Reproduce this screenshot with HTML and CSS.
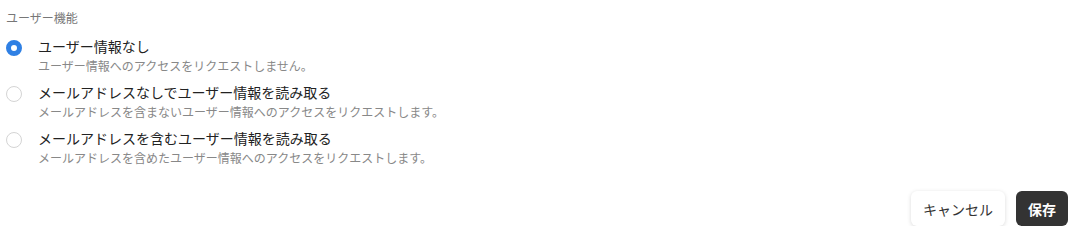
FILE: index.html
```html
<!DOCTYPE html>
<html lang="ja">
<head>
    <meta charset="UTF-8">
    <meta name="viewport" content="width=device-width, initial-scale=1.0">
    <title>ユーザー機能</title>
    <link rel="stylesheet" href="styles.css">
</head>
<body>
    <div class="panel">
        <div class="section-label">ユーザー機能</div>

        <div class="options">
            <label class="option">
                <input type="radio" name="user-scope" class="radio" checked>
                <span class="option-text">
                    <span class="option-title">ユーザー情報なし</span>
                    <span class="option-desc">ユーザー情報へのアクセスをリクエストしません。</span>
                </span>
            </label>

            <label class="option">
                <input type="radio" name="user-scope" class="radio">
                <span class="option-text">
                    <span class="option-title">メールアドレスなしでユーザー情報を読み取る</span>
                    <span class="option-desc">メールアドレスを含まないユーザー情報へのアクセスをリクエストします。</span>
                </span>
            </label>

            <label class="option">
                <input type="radio" name="user-scope" class="radio">
                <span class="option-text">
                    <span class="option-title">メールアドレスを含むユーザー情報を読み取る</span>
                    <span class="option-desc">メールアドレスを含めたユーザー情報へのアクセスをリクエストします。</span>
                </span>
            </label>
        </div>

        <div class="actions">
            <button class="btn btn-cancel">キャンセル</button>
            <button class="btn btn-save">保存</button>
        </div>
    </div>
</body>
</html>
```

FILE: styles.css
```css
body {
    margin: 0;
    padding: 0;
    background-color: #fff;
    font-family: "Noto Sans CJK JP", "Noto Sans", sans-serif;
    color: #222;
}
.panel {
    padding: 9px 15px 0 6px;
}
.section-label {
    font-size: 12px;
    line-height: 18px;
    color: #777;
}
.options {
    display: flex;
    flex-direction: column;
    gap: 7px;
    margin-top: 9px;
}
.option {
    display: flex;
    align-items: flex-start;
    gap: 16px;
    cursor: pointer;
}
.radio {
    appearance: none;
    -webkit-appearance: none;
    width: 16px;
    height: 16px;
    margin: 4px 0 0 0;
    border: 1px solid #d4d4d4;
    border-radius: 50%;
    background-color: #fff;
    flex-shrink: 0;
    box-sizing: border-box;
}
.radio:checked {
    border: 5px solid #2f80e4;
    background-color: #fff;
}
.option-text {
    display: flex;
    flex-direction: column;
}
.option-title {
    font-size: 14px;
    line-height: 20px;
    color: #222;
}
.option-desc {
    font-size: 12px;
    line-height: 18px;
    margin-top: 1px;
    color: #888;
}
.actions {
    display: flex;
    justify-content: flex-end;
    gap: 11px;
    margin-top: 24px;
}
.btn {
    font-family: inherit;
    font-size: 14px;
    height: 35px;
    padding: 0 12px;
    border: none;
    border-radius: 6px;
    cursor: pointer;
}
.btn-cancel {
    background-color: #fff;
    color: #333;
    box-shadow: 0 1px 4px rgba(0, 0, 0, 0.15);
}
.btn-save {
    background-color: #333;
    color: #fff;
    font-weight: bold;
}
```
